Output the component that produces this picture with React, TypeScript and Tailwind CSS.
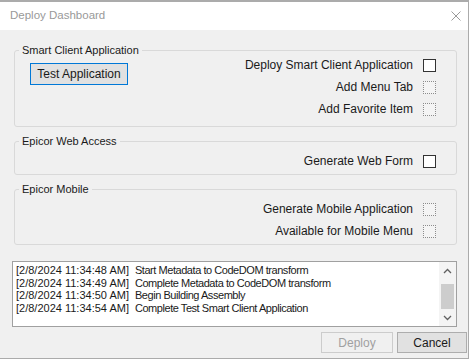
import React from 'react'

const font = { fontFamily: '"Liberation Sans", Arial, sans-serif' }

const CheckBox = ({ dotted }: { dotted?: boolean }) => (
  <span
    className={`block h-[13px] w-[13px] shrink-0 ${dotted ? 'border border-dotted border-[#8c8c8c] bg-[#f4f4f4]' : 'border border-[#333333] bg-white'}`}
  />
)

const Row = ({ label, dotted }: { label: string; dotted?: boolean }) => (
  <div className="flex h-[13px] items-center justify-end gap-[10px]">
    <span className="text-[12px] leading-[13px] text-[#1a1a1a]">{label}</span>
    <CheckBox dotted={dotted} />
  </div>
)

const Group = ({ title, className, children }: { title: string; className?: string; children: React.ReactNode }) => (
  <fieldset className={`ml-[14px] mr-[11px] rounded-[3px] border border-[#d9d9d9] ${className ?? ''}`}>
    <legend className="ml-[4px] px-[3px] text-[11px] leading-[14px] text-[#1a1a1a]">{title}</legend>
    {children}
  </fieldset>
)

const logLines = [
  ['[2/8/2024 11:34:48 AM]', 'Start Metadata to CodeDOM transform'],
  ['[2/8/2024 11:34:49 AM]', 'Complete Metadata to CodeDOM transform'],
  ['[2/8/2024 11:34:50 AM]', 'Begin Building Assembly'],
  ['[2/8/2024 11:34:54 AM]', 'Complete Test Smart Client Application'],
]

export default function App() {
  return (
    <div className="h-[362px] w-[474px] overflow-hidden bg-white" style={font}>
      <div className="flex h-[359px] w-[469px] flex-col border-t-2 border-r border-b border-[#ababab] bg-[#f0f0f0]">
        {/* title bar */}
        <div className="flex h-[28px] shrink-0 items-center justify-between bg-white pl-[10px] pr-[7px]">
          <span className="text-[11.5px] text-[#999999]">Deploy Dashboard</span>
          <svg width="10" height="10" viewBox="0 0 10 10">
            <path d="M.5.5 9.5 9.5M9.5.5.5 9.5" stroke="#9a9a9a" strokeWidth="1" />
          </svg>
        </div>

        <Group title="Smart Client Application" className="mt-[13px]">
          <div className="flex justify-between pt-[2px] pb-[10px] pl-[15px] pr-[20px]">
            <button className="mt-[4px] h-[22px] w-[98px] border border-[#0078d7] bg-[#e1e1e1] text-[12px] text-[#1a1a1a]">
              Test Application
            </button>
            <div className="flex flex-col gap-[9px]">
              <Row label="Deploy Smart Client Application" />
              <Row label="Add Menu Tab" dotted />
              <Row label="Add Favorite Item" dotted />
            </div>
          </div>
        </Group>

        <Group title="Epicor Web Access" className="mt-[7px]">
          <div className="flex flex-col pt-[7px] pb-[6px] pr-[20px]">
            <Row label="Generate Web Form" />
          </div>
        </Group>

        <Group title="Epicor Mobile" className="mt-[7px]">
          <div className="flex flex-col gap-[9px] pt-[7px] pb-[6px] pr-[20px]">
            <Row label="Generate Mobile Application" dotted />
            <Row label="Available for Mobile Menu" dotted />
          </div>
        </Group>

        {/* log */}
        <div className="ml-[12px] mr-[11px] mt-[16px] flex h-[66px] border border-[#a0a0a0] bg-white">
          <div className="flex-1 pl-[3px] pt-[2px]">
            {logLines.map(([time, msg]) => (
              <div key={time} className="flex whitespace-pre text-[11px] leading-[12.5px] text-[#1a1a1a]">
                <span>{time}</span>
                <span className="ml-[6px] tracking-[-0.45px]">{msg}</span>
              </div>
            ))}
          </div>
          <div className="flex w-[17px] flex-col items-center bg-[#f4f4f4]">
            <div className="flex h-[17px] items-center justify-center">
              <svg width="9" height="6" viewBox="0 0 9 6">
                <path d="M1 5 4.5 1.5 8 5" fill="none" stroke="#606060" strokeWidth="1.3" />
              </svg>
            </div>
            <div className="mt-[5px] h-[25px] w-[13px] bg-[#cdcdcd]" />
            <div className="flex-1" />
            <div className="flex h-[17px] items-center justify-center">
              <svg width="9" height="6" viewBox="0 0 9 6">
                <path d="M1 1 4.5 4.5 8 1" fill="none" stroke="#606060" strokeWidth="1.3" />
              </svg>
            </div>
          </div>
        </div>

        {/* buttons */}
        <div className="mt-[5px] flex justify-end gap-[4px] pr-[1px]">
          <button className="h-[21px] w-[72px] border border-[#cccccc] bg-[#f0f0f0] text-[12px] text-[#a0a0a0]">
            Deploy
          </button>
          <button className="h-[21px] w-[70px] border border-[#adadad] bg-[#e1e1e1] text-[12px] text-[#1a1a1a]">
            Cancel
          </button>
        </div>
      </div>
    </div>
  )
}
